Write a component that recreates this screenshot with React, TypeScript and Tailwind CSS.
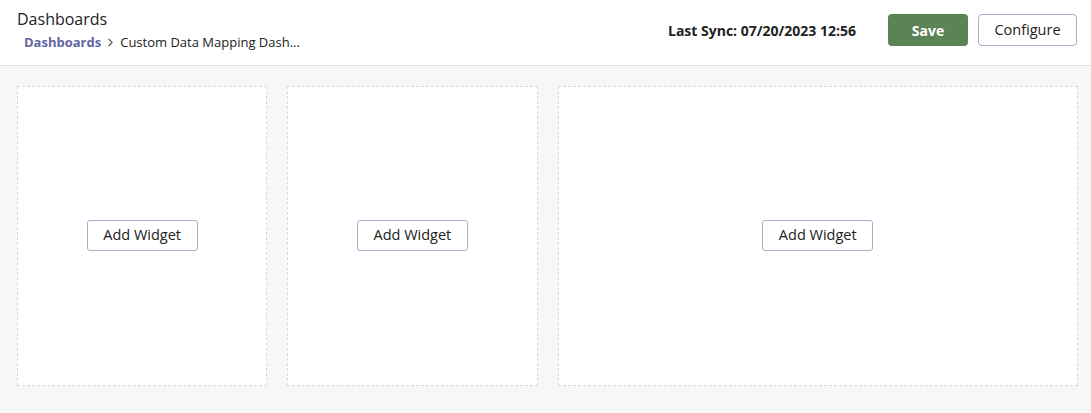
import { ChevronRight } from 'lucide-react';

function WidgetSlot({ wide }: { wide?: boolean }) {
  return (
    <div
      className={`h-[300px] bg-white border border-dashed border-[#d9d9d9] flex items-center justify-center ${
        wide ? 'col-span-2' : ''
      }`}
    >
      <button className="h-[31px] w-[111px] -mt-[2px] rounded-[3px] border border-[#a3b0cc] bg-white text-[14.5px] text-[#222]">
        Add Widget
      </button>
    </div>
  );
}

export default function App() {
  return (
    <div className="h-[413px] bg-[#f7f7f7] font-['Open_Sans',sans-serif] text-[#222]">
      {/* Header */}
      <header className="h-[66px] bg-white border-b border-[#dedede] flex items-start justify-between pl-[17px] pr-[14px]">
        <div className="pt-[8px]">
          <h1 className="text-[16px] leading-[22px]">Dashboards</h1>
          <div className="flex items-center pl-[7px] mt-[3px] text-[13px] leading-[18px]">
            <span className="font-bold text-[#6165a3]">Dashboards</span>
            <ChevronRight className="w-[13px] h-[13px] mx-[3px] text-[#555]" strokeWidth={2} />
            <span>Custom Data Mapping Dash...</span>
          </div>
        </div>

        <div className="flex items-center pt-[14px]">
          <span className="text-[14px] font-bold mr-[32px]">Last Sync: 07/20/2023 12:56</span>
          <button className="h-[32px] w-[80px] rounded-[4px] bg-[#5b8456] text-white text-[14px] font-bold">
            Save
          </button>
          <button className="h-[32px] w-[99px] ml-[10px] rounded-[4px] border border-[#a3b0cc] bg-white text-[14.5px]">
            Configure
          </button>
        </div>
      </header>

      {/* Widget grid */}
      <div className="grid grid-cols-4 gap-[20px] pl-[17px] pr-[13px] pt-[20px]">
        <WidgetSlot />
        <WidgetSlot />
        <WidgetSlot wide />
      </div>
    </div>
  );
}
